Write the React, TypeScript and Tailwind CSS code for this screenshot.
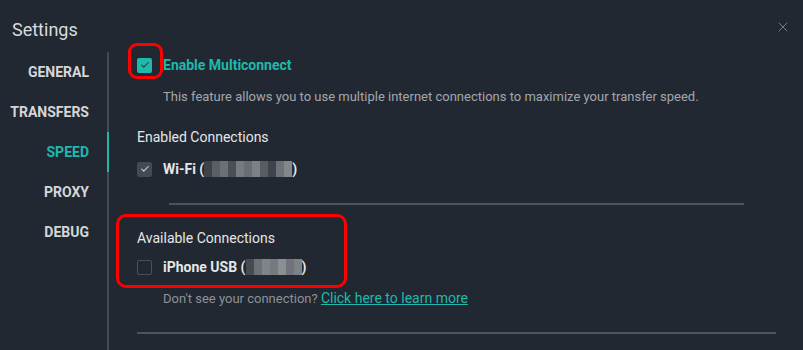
import { Check, X } from 'lucide-react'

const NAV = ['GENERAL', 'TRANSFERS', 'SPEED', 'PROXY', 'DEBUG']

// pixelated redaction blocks
function Redacted({ cells }: { cells: string[] }) {
  return (
    <span className="inline-flex h-[16px] align-middle">
      {cells.map((c, i) => (
        <span key={i} className="w-[8px] h-full" style={{ background: c }} />
      ))}
    </span>
  )
}

const WIFI = ['#3d434b', '#5a5f66', '#6b7077', '#4a4f56', '#777b81', '#6a6e74', '#7d8187', '#585d64', '#3f444c', '#6e7278', '#838789']
const USB = ['#464b52', '#6d7177', '#80848a', '#767a80', '#8b8f94', '#70747a', '#7e8287']

function Box({ checked, teal }: { checked?: boolean; teal?: boolean }) {
  return (
    <span
      className={`w-[15px] h-[15px] rounded-[2px] flex items-center justify-center shrink-0 ${
        teal ? 'bg-[#1fb8ad]' : checked ? 'bg-[#454a52]' : 'border border-[#4b5058]'
      }`}
    >
      {checked && <Check className={`w-[10px] h-[10px] ${teal ? 'text-[#1d3d3d]' : 'text-[#d8dadd]'}`} strokeWidth={2.5} />}
    </span>
  )
}

export default function App() {
  return (
    <div className="w-[803px] h-[350px] bg-[#222831] overflow-hidden relative font-['Roboto',sans-serif] text-[#e4e6e8]">
      <div className="flex items-start justify-between">
        <h1 className="pl-[12px] pt-[18px] text-[18px] leading-[24px] text-[#d9dbde]">Settings</h1>
        <button type="button" className="mt-[19px] mr-[12px] text-[#7d828a]">
          <X className="w-[16px] h-[16px]" strokeWidth={1.4} />
        </button>
      </div>

      <div className="flex mt-[10px]">
        {/* Sidebar */}
        <nav className="w-[107px] shrink-0 flex flex-col">
          {NAV.map(label => (
            <div
              key={label}
              className={`h-[40px] flex items-center justify-end pr-[18px] text-[14px] font-bold ${
                label === 'SPEED' ? 'text-[#1fb8ad]' : 'text-[#d4d6d9]'
              }`}
            >
              {label}
            </div>
          ))}
        </nav>
        <div className="w-[2px] h-[300px] bg-[#444a52] flex flex-col">
          <div className="h-[80px]" />
          <div className="h-[40px] bg-[#1fb8ad]" />
        </div>

        {/* Main */}
        <div className="flex-1 pl-[28px] relative">
          <div className="h-[24px] mt-[1px] flex items-center gap-[11px]">
            <Box checked teal />
            <span className="text-[14px] font-bold text-[#1fb8ad]">Enable Multiconnect</span>
          </div>
          <p className="ml-[26px] mt-[10px] text-[13px] leading-[20px] text-[#a3a7ac]">
            This feature allows you to use multiple internet connections to maximize your transfer speed.
          </p>

          <h2 className="mt-[20px] text-[14px] leading-[20px] text-[#e4e6e8]">Enabled Connections</h2>
          <div className="mt-[12px] h-[20px] flex items-center gap-[11px]">
            <Box checked />
            <span className="text-[14px] font-bold flex items-center">
              Wi-Fi (<Redacted cells={WIFI} />)
            </span>
          </div>
          <div className="ml-[32px] mr-[59px] mt-[24px] h-[2px] bg-[#4f545b]" />

          <h2 className="mt-[23px] text-[14px] leading-[20px] text-[#e4e6e8]">Available Connections</h2>
          <div className="mt-[9px] h-[20px] flex items-center gap-[11px]">
            <Box />
            <span className="text-[14px] font-bold flex items-center">
              iPhone USB (<Redacted cells={USB} />)
            </span>
          </div>
          <p className="ml-[26px] mt-[11px] text-[13px] leading-[20px] text-[#8d9197]">
            Don't see your connection?{' '}
            <a href="#" className="text-[14px] text-[#1fb8ad] underline">Click here to learn more</a>
          </p>
          <div className="mr-[27px] mt-[23px] h-[2px] bg-[#4f545b]" />

          {/* annotation highlights */}
          <div className="absolute left-[19px] top-[-9px] w-[35px] h-[36px] border-[3px] border-[#ff0000] rounded-[9px]" />
          <div className="absolute left-[7px] top-[162px] w-[231px] h-[74px] border-[3px] border-[#ff0000] rounded-[10px]" />
        </div>
      </div>
    </div>
  )
}
